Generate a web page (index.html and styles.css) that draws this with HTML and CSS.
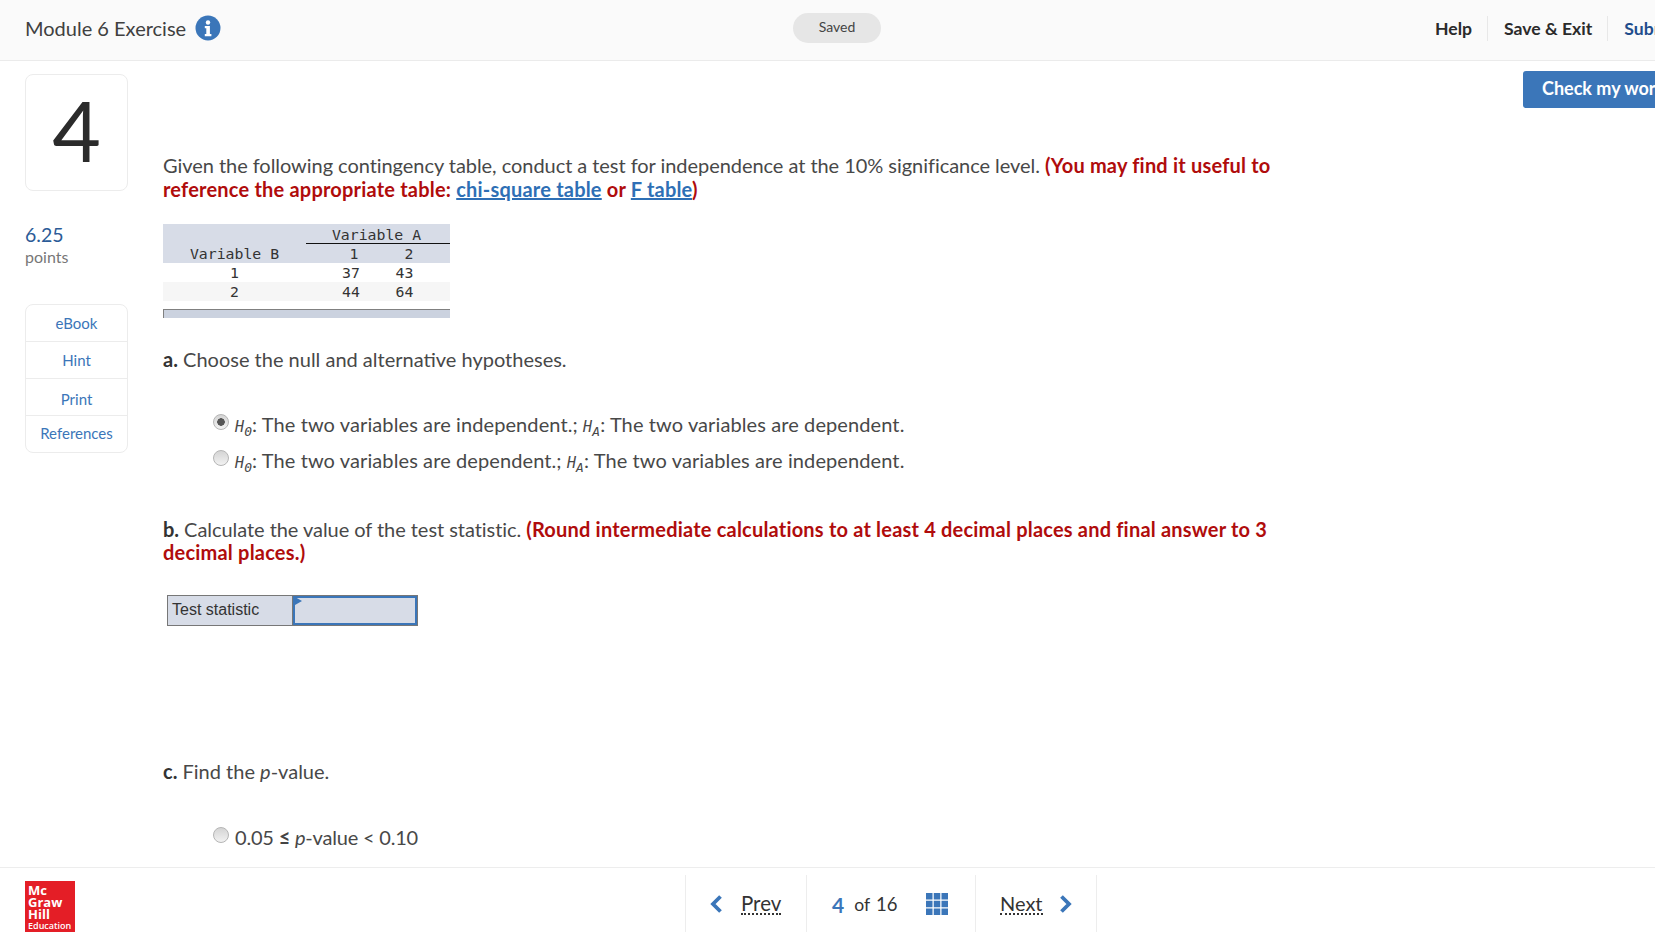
FILE: index.html
```html
<!DOCTYPE html>
<html lang="en">
<head>
  <meta charset="UTF-8">
  <title>Module 6 Exercise</title>
  <link rel="stylesheet" href="styles.css">
</head>
<body>
  <!-- top bar -->
  <header class="top-bar">
    <div class="top-title">
      <span>Module 6 Exercise</span>
      <svg class="info-icon" width="26" height="26" viewBox="0 0 26 26">
        <circle cx="13" cy="13" r="12.5" fill="#3b76b9"/>
        <circle cx="13" cy="7.5" r="2.2" fill="#fff"/>
        <path d="M9.8 11h5.1v8h1.5v2.2H9.8V19h1.5v-5.8H9.8z" fill="#fff"/>
      </svg>
    </div>
    <div class="saved-pill">Saved</div>
    <nav class="top-links">
      <a class="top-link">Help</a>
      <a class="top-link">Save &amp; Exit</a>
      <a class="top-link submit">Submit</a>
    </nav>
  </header>

  <main class="question">
    <!-- left column -->
    <aside class="side">
      <div class="number-card">4</div>
      <div class="score">6.25</div>
      <div class="score-label">points</div>
      <div class="side-links">
        <a class="side-link">eBook</a>
        <a class="side-link">Hint</a>
        <a class="side-link">Print</a>
        <a class="side-link">References</a>
      </div>
    </aside>

    <!-- question body -->
    <section class="body">
      <p class="intro">Given the following contingency table, conduct a test for independence at the 10% significance level. <b class="red">(You may find it useful to reference the appropriate table: <a class="table-link">chi-square table</a> or <a class="table-link">F table</a>)</b></p>

      <div class="data-table">
        <div class="data-head">
          <div class="head-row"><span class="col-b"></span><span class="head-a">Variable A</span></div>
          <div class="head-row"><span class="col-b">Variable B</span><span class="col-1">1</span><span class="col-2">2</span></div>
        </div>
        <div class="data-row"><span class="col-b">1</span><span class="col-1">37</span><span class="col-2">43</span></div>
        <div class="data-row alt"><span class="col-b">2</span><span class="col-1">44</span><span class="col-2">64</span></div>
        <div class="data-foot"></div>
      </div>

      <p class="part part-a"><b>a.</b> Choose the null and alternative hypotheses.</p>
      <div class="options">
        <label class="option"><input type="radio" name="a" checked><span><i class="sym">H<sub>0</sub></i>: The two variables are independent.; <i class="sym">H<sub>A</sub></i>: The two variables are dependent.</span></label>
        <label class="option"><input type="radio" name="a"><span><i class="sym">H<sub>0</sub></i>: The two variables are dependent.; <i class="sym">H<sub>A</sub></i>: The two variables are independent.</span></label>
      </div>

      <p class="part part-b"><b>b.</b> Calculate the value of the test statistic. <b class="red">(Round intermediate calculations to at least 4 decimal places and final answer to 3 decimal places.)</b></p>
      <div class="stat-table">
        <div class="stat-label">Test statistic</div>
        <div class="stat-input"></div>
      </div>

      <p class="part part-c"><b>c.</b> Find the <i>p</i>-value.</p>
      <div class="options options-c">
        <label class="option"><input type="radio" name="c"><span class="range">0.05 <b class="lte">≤</b> <i>p</i>-value &lt; 0.10</span></label>
      </div>
    </section>

    <div class="check-wrap"><button class="check-btn">Check my work</button></div>
  </main>

  <!-- bottom bar -->
  <footer class="bottom-bar">
    <div class="logo">Mc<br>Graw<br>Hill<br><small>Education</small></div>
    <nav class="pager">
      <a class="pager-cell prev">
        <svg width="14" height="18" viewBox="0 0 14 18"><path d="M11.500 1.500 4 9l7.500 7.500" fill="none" stroke="#3b76b9" stroke-width="3.800"/></svg>
        <span class="pager-word">Prev</span>
      </a>
      <div class="pager-cell count">
        <b>4</b><span class="of">of</span><span>16</span>
        <svg class="grid-icon" width="22" height="22" viewBox="0 0 22 22" fill="#3b76b9">
          <rect width="6.500" height="6.500"/><rect x="7.750" width="6.500" height="6.500"/><rect x="15.500" width="6.500" height="6.500"/>
          <rect y="7.750" width="6.500" height="6.500"/><rect x="7.750" y="7.750" width="6.500" height="6.500"/><rect x="15.500" y="7.750" width="6.500" height="6.500"/>
          <rect y="15.500" width="6.500" height="6.500"/><rect x="7.750" y="15.500" width="6.500" height="6.500"/><rect x="15.500" y="15.500" width="6.500" height="6.500"/>
        </svg>
      </div>
      <a class="pager-cell next">
        <span class="pager-word">Next</span>
        <svg width="14" height="18" viewBox="0 0 14 18"><path d="M2.500 1.500 10 9l-7.500 7.500" fill="none" stroke="#3b76b9" stroke-width="3.800"/></svg>
      </a>
    </nav>
  </footer>
</body>
</html>
```

FILE: styles.css
```css
* {
  box-sizing: border-box;
}

body {
  margin: 0;
  width: 1655px;
  height: 932px;
  overflow: hidden;
  display: flex;
  flex-direction: column;
  background: white;
  color: #484848;
  font-family: Lato, "Open Sans", Arial, sans-serif;
}

/* top bar */
.top-bar {
  flex: none;
  height: 61px;
  padding: 0 0 4px 25px;
  display: grid;
  grid-template-columns: 768px 88px 1fr;
  align-items: center;
  background: #fafafa;
  border-bottom: 1px solid #ebebeb;
  overflow: hidden;
}

.top-title {
  display: flex;
  align-items: center;
  gap: 9px;
  font-size: 20px;
  color: #404040;
}

.saved-pill {
  height: 30px;
  border-radius: 15px;
  background: #e6e6e6;
  color: #444;
  font-size: 14px;
  line-height: 28px;
  text-align: center;
}

.top-links {
  display: flex;
  align-items: center;
  padding-left: 538px;
  white-space: nowrap;
}

.top-link {
  padding: 0 15px 0 16px;
  height: 25px;
  line-height: 25px;
  font-size: 17.600px;
  font-weight: 700;
  color: #2b2b2b;
  border-right: 1px solid #e8e8e8;
}

.top-link.submit {
  color: #1f4d8c;
  border-right: none;
}

/* main area */
.question {
  flex: 1;
  min-height: 0;
  display: grid;
  grid-template-columns: 163px 1360px 200px;
  overflow: hidden;
}

.side {
  padding: 13px 0 0 25px;
}

.number-card {
  width: 103px;
  height: 117px;
  border: 1px solid #ececec;
  border-radius: 8px;
  color: #2b2b2b;
  font-size: 84px;
  line-height: 109px;
  text-align: center;
}

.score {
  margin-top: 32px;
  color: #2b5b97;
  font-size: 19.500px;
  line-height: 24px;
}

.score-label {
  color: #777;
  font-size: 16px;
  line-height: 19px;
}

.side-links {
  width: 103px;
  height: 149px;
  margin-top: 38px;
  border: 1px solid #ececec;
  border-radius: 8px;
}

.side-link {
  display: block;
  height: 37px;
  border-bottom: 1px solid #ececec;
  color: #3b76b9;
  font-size: 15px;
  line-height: 36px;
  text-align: center;
}

.side-link:nth-child(3) {
  line-height: 40px;
}

.side-link:last-child {
  border-bottom: none;
  line-height: 34px;
}

.body {
  padding-top: 92px;
  width: 1120px;
  font-size: 20px;
  line-height: 23px;
}

.body p {
  margin: 0;
}

.intro,
.part-b {
  letter-spacing: -0.05px;
}

.intro {
  line-height: 24px;
}

.red {
  color: #b00c0c;
  letter-spacing: 0.2px;
}

.table-link {
  color: #2e6fb5;
  text-decoration: underline;
}

/* contingency table */
.data-table {
  width: 287px;
  margin-top: 23px;
  color: #333;
  font-family: "DejaVu Sans Mono", monospace;
  font-size: 14.800px;
  line-height: 20px;
}

.data-head {
  background: #d7dce7;
}

.head-row,
.data-row {
  display: flex;
  height: 19.500px;
  text-align: center;
}

.data-row {
  height: 19px;
}

.data-row.alt {
  background: #f6f6f6;
}

.col-b {
  width: 143px;
  flex: none;
}

.head-a {
  flex: 1;
  border-bottom: 1px solid #111;
  padding-right: 3px;
  line-height: 21px;
}

.col-1 {
  width: 88px;
  padding-left: 2px;
}

.col-2 {
  width: 56px;
  padding-right: 35px;
}

.head-row .col-1 {
  padding-left: 8px;
}

.head-row .col-2 {
  padding-right: 26px;
}

.data-foot {
  height: 9px;
  margin-top: 8px;
  background: #cbd2df;
  border-top: 1px solid #808080;
  border-left: 1px solid #808080;
}

/* parts */
.part-a {
  margin-top: 30px !important;
}

.part b {
  color: #333;
}

.part b.red {
  color: #b00c0c;
}

.options {
  margin-top: 42px;
  padding-left: 50px;
  letter-spacing: 0.1px;
}

.option {
  display: flex;
  align-items: flex-start;
  gap: 6px;
  height: 36px;
}

.option input {
  appearance: none;
  flex: none;
  width: 16px;
  height: 16px;
  margin: 1px 0 0;
  border: 1px solid #b5b5b5;
  border-radius: 50%;
  background: linear-gradient(#d4d4d4, #f2f2f2);
}

.option input:checked {
  background: radial-gradient(circle, #555 0 3.500px, transparent 4px), linear-gradient(#d4d4d4, #f2f2f2);
}

.sym {
  font-family: "DejaVu Sans Mono", monospace;
  font-size: 15px;
}

.sym sub {
  font-size: 13px;
  line-height: 0;
}

.part-b {
  margin-top: 33px !important;
}

.stat-table {
  display: flex;
  width: 251px;
  height: 31px;
  margin: 31px 0 0 4px;
  background: #d7dce7;
  border: 1px solid #777;
  color: #333;
  font-family: "Liberation Sans", Arial, sans-serif;
  font-size: 16px;
  line-height: 27px;
}

.stat-label {
  width: 125px;
  padding-left: 4px;
}

.stat-input {
  position: relative;
  flex: 1;
  border: 2px solid #3b76b9;
  outline: 1px solid #777;
}

.stat-input::before {
  content: "";
  position: absolute;
  top: -1px;
  left: 0;
  border-left: 7px solid #3b76b9;
  border-top: 4px solid transparent;
  border-bottom: 4px solid transparent;
}

.part-c {
  margin-top: 134px !important;
}

.options-c {
  margin-top: 43px;
}

.range {
  letter-spacing: -0.2px;
}

.lte {
  color: #444;
}

.check-wrap {
  padding-top: 10px;
}

.check-btn {
  width: 160px;
  height: 37px;
  padding: 0 0 4px 19px;
  border: none;
  border-radius: 3px;
  background: #3b76b9;
  color: white;
  font-family: inherit;
  font-size: 18px;
  font-weight: 700;
  text-align: left;
  white-space: nowrap;
}

/* bottom bar */
.bottom-bar {
  flex: none;
  height: 65px;
  padding: 13px 0 0 25px;
  display: flex;
  position: relative;
  border-top: 1px solid #ededed;
  background: white;
}

.logo {
  width: 50px;
  height: 51px;
  padding: 3px 0 0 3px;
  background: #e41e26;
  color: white;
  font-family: "Open Sans", Arial, sans-serif;
  font-size: 13px;
  font-weight: 700;
  line-height: 12px;
}

.logo small {
  display: block;
  margin-top: 1px;
  font-size: 9px;
  line-height: 9px;
  font-weight: 600;
}

.pager {
  display: flex;
  height: 58px;
  margin: -6px 0 0 610px;
  border-left: 1px solid #ededed;
  font-size: 20px;
  color: #333;
}

.pager-cell {
  display: flex;
  align-items: center;
  border-right: 1px solid #ededed;
}

.prev {
  width: 121px;
  padding-left: 23px;
  gap: 18px;
  font-size: 20.500px;
}

.count {
  width: 169px;
  padding-left: 25px;
  font-size: 18.500px;
}

.count b {
  color: #3b76b9;
  font-size: 21px;
}

.of {
  margin: 0 6px 0 10px;
  font-size: 17.500px;
}

.grid-icon {
  margin-left: 28px;
}

.next {
  width: 121px;
  padding-left: 24px;
  gap: 16px;
}

.pager-word {
  border-bottom: 2px dotted #333;
  line-height: 20px;
}
```
